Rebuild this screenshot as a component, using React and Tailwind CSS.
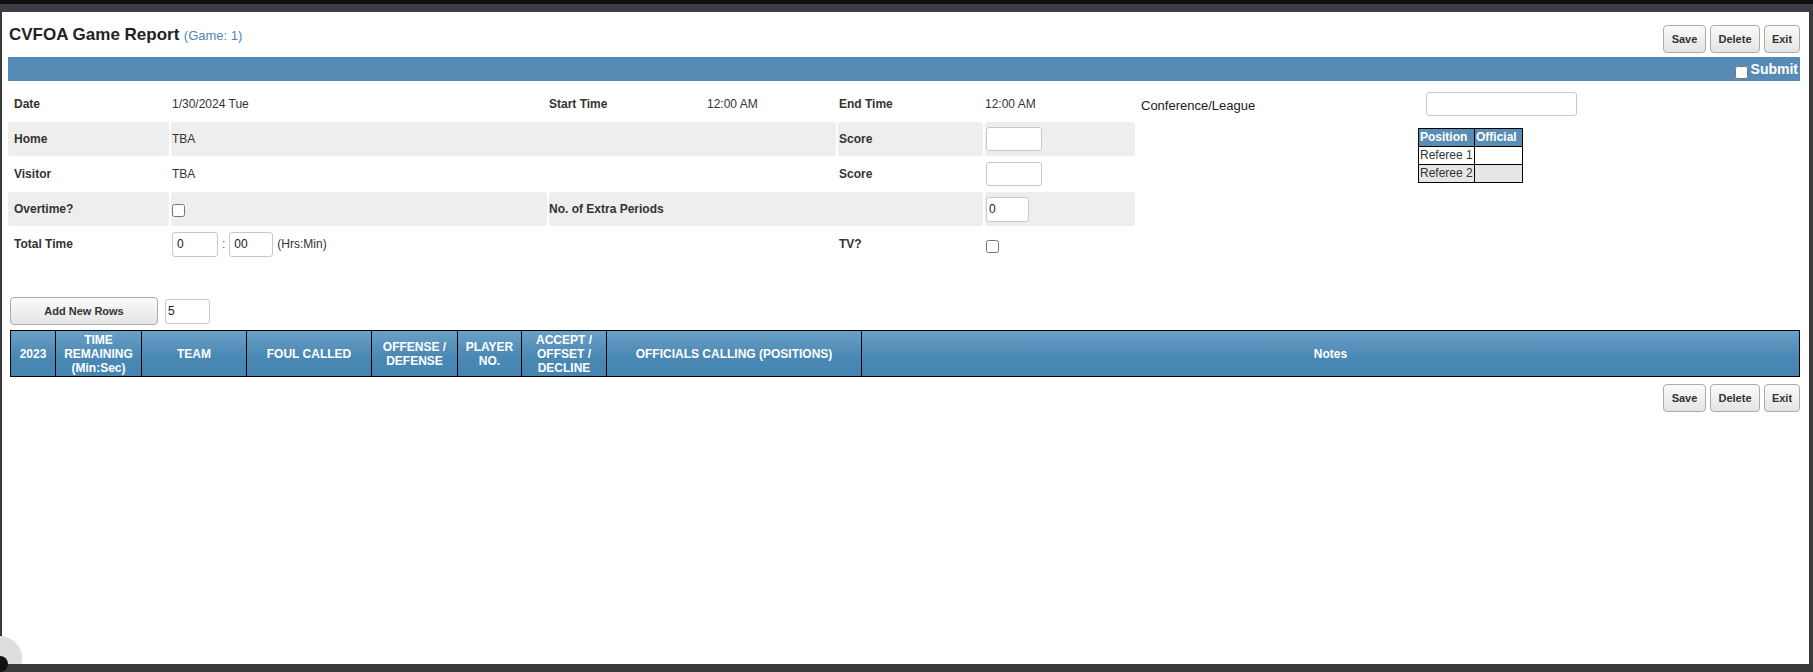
import React from "react";

const font = "font-['Liberation_Sans',Arial,Helvetica,sans-serif]";

function GrayButton({ children, className = "" }) {
  return (
    <button
      type="button"
      className={`h-[28px] rounded-[4px] border border-[#ababab] bg-[linear-gradient(to_bottom,#fbfbfb,#e4e4e4)] text-[11px] font-bold text-[#333] leading-none ${className}`}
    >
      {children}
    </button>
  );
}

function ActionButtons() {
  return (
    <div className="flex gap-[4px]">
      <GrayButton className="w-[43px]">Save</GrayButton>
      <GrayButton className="w-[50px]">Delete</GrayButton>
      <GrayButton className="w-[36px]">Exit</GrayButton>
    </div>
  );
}

function TextBox({ value = "", className = "" }) {
  return (
    <input
      type="text"
      defaultValue={value}
      className={`border border-[#c8c8c8] rounded-[3px] bg-white px-[4px] text-[12px] text-[#222] outline-none ${className}`}
    />
  );
}

function Check({ className = "" }) {
  return <input type="checkbox" className={`w-[13px] h-[13px] m-0 ${className}`} />;
}

const label = "text-[12px] font-bold text-[#333]";
const value = "text-[12px] text-[#333]";
const gray = "bg-[#eeeeee] rounded-[3px]";

function GameForm() {
  return (
    <div className="grid grid-cols-[161px_376px_155px_130px_145px_150px] auto-rows-[34px] gap-x-[2px] gap-y-[1px]">
      {/* Date row */}
      <div className={`flex items-center pl-[6px] ${label}`}>Date</div>
      <div className={`flex items-center pl-[1px] ${value}`}>1/30/2024 Tue</div>
      <div className={`flex items-center ${label}`}>Start Time</div>
      <div className={`flex items-center pl-[1px] ${value}`}>12:00 AM</div>
      <div className={`flex items-center pl-[1px] ${label}`}>End Time</div>
      <div className={`flex items-center ${value}`}>12:00 AM</div>

      {/* Home row */}
      <div className={`flex items-center pl-[6px] ${gray} ${label}`}>Home</div>
      <div className={`col-span-3 flex items-center pl-[1px] ${gray} ${value}`}>TBA</div>
      <div className={`flex items-center pl-[1px] ${gray} ${label}`}>Score</div>
      <div className={`flex items-center pl-[1px] ${gray}`}>
        <TextBox className="w-[56px] h-[24px]" />
      </div>

      {/* Visitor row */}
      <div className={`flex items-center pl-[6px] ${label}`}>Visitor</div>
      <div className={`col-span-3 flex items-center pl-[1px] ${value}`}>TBA</div>
      <div className={`flex items-center pl-[1px] ${label}`}>Score</div>
      <div className="flex items-center pl-[1px]">
        <TextBox className="w-[56px] h-[24px]" />
      </div>

      {/* Overtime row */}
      <div className={`flex items-center pl-[6px] ${gray} ${label}`}>Overtime?</div>
      <div className={`flex items-center pl-[1px] pt-[3px] ${gray}`}>
        <Check />
      </div>
      <div className={`col-span-3 flex items-center ${gray} ${label}`}>No. of Extra Periods</div>
      <div className={`flex items-center pl-[1px] ${gray}`}>
        <TextBox value="0" className="w-[43px] h-[25px] pl-[2px]" />
      </div>

      {/* Total time row */}
      <div className={`flex items-center pl-[6px] ${label}`}>Total Time</div>
      <div className="flex items-center pl-[1px] gap-[4px]">
        <TextBox value="0" className="w-[46px] h-[25px]" />
        <span className="text-[12px] text-[#555]">:</span>
        <TextBox value="00" className="w-[44px] h-[25px]" />
        <span className={value}>(Hrs:Min)</span>
      </div>
      <div />
      <div />
      <div className={`flex items-center pl-[1px] ${label}`}>TV?</div>
      <div className="flex items-center pl-[1px] pt-[4px]">
        <Check />
      </div>
    </div>
  );
}

function OfficialsTable() {
  const cell = "border border-black px-[1px] text-[12px] leading-[17px] text-left whitespace-nowrap";
  return (
    <table className="border-collapse">
      <thead>
        <tr className="bg-[#5a8db6]">
          <th className={`${cell} w-[56px] font-bold text-white`}>Position</th>
          <th className={`${cell} w-[48px] font-bold text-white`}>Official</th>
        </tr>
      </thead>
      <tbody>
        <tr className="bg-white">
          <td className={`${cell} text-[#333]`}>Referee 1</td>
          <td className={cell}></td>
        </tr>
        <tr className="bg-[#e6e6e6]">
          <td className={`${cell} text-[#333]`}>Referee 2</td>
          <td className={cell}></td>
        </tr>
      </tbody>
    </table>
  );
}

const columns = [
  { w: "w-[44px]", lines: ["2023"] },
  { w: "w-[86px]", lines: ["TIME", "REMAINING", "(Min:Sec)"] },
  { w: "w-[105px]", lines: ["TEAM"] },
  { w: "w-[125px]", lines: ["FOUL CALLED"] },
  { w: "w-[86px]", lines: ["OFFENSE /", "DEFENSE"] },
  { w: "w-[64px]", lines: ["PLAYER", "NO."] },
  { w: "w-[85px]", lines: ["ACCEPT /", "OFFSET /", "DECLINE"] },
  { w: "w-[255px]", lines: ["OFFICIALS CALLING (POSITIONS)"] },
  { w: "flex-1", lines: ["Notes"] },
];

function PenaltyHeader() {
  return (
    <div className="ml-[2px] mt-[5px] h-[47px] flex border border-black bg-[linear-gradient(to_bottom,#6aa0c6,#4b89b5_55%,#4585b1)]">
      {columns.map((c, i) => (
        <div
          key={i}
          className={`${c.w} ${i > 0 ? "border-l border-black" : ""} flex flex-col items-center justify-center text-center text-[12px] font-bold leading-[14px] text-white`}
        >
          {c.lines.map((l) => (
            <span key={l}>{l}</span>
          ))}
        </div>
      ))}
    </div>
  );
}

export default function App() {
  return (
    <div className={`relative w-[1813px] h-[672px] overflow-hidden bg-[#3a3a3a] flex flex-col ${font}`}>
      <div className="h-[4px] bg-[#111113]" />
      <div className="h-[8px] bg-[#3d3d45]" />
      <div className="flex flex-1 min-h-0">
        <div className="w-[2px] bg-[#3a3a3a]" />
        <main className="flex-1 bg-white pl-[6px] pr-[9px] pt-[13px]">
          <div className="flex justify-between items-start">
            <h1 className="pl-[1px] leading-[20px] text-[#222]">
              <span className="text-[17px] font-bold">CVFOA Game Report</span>{" "}
              <span className="text-[13px] text-[#4f86b6]">(Game: 1)</span>
            </h1>
            <ActionButtons />
          </div>

          <div className="mt-[4px] h-[24px] bg-[#558bb4] flex items-center justify-end pr-[2px]">
            <Check className="mt-[7px] mr-[3px]" />
            <span className="text-[14px] font-bold text-white">Submit</span>
          </div>

          <div className="mt-[6px] flex items-start">
            <GameForm />
            <div className="ml-[6px] flex flex-col">
              <div className="h-[34px] flex items-center">
                <span className="w-[285px] pt-[3px] text-[13px] text-[#222]">Conference/League</span>
                <TextBox className="w-[151px] h-[24px]" />
              </div>
              <div className="ml-[277px] mt-[7px]">
                <OfficialsTable />
              </div>
            </div>
          </div>

          <div className="mt-[36px] flex items-center">
            <button
              type="button"
              className="ml-[2px] w-[148px] h-[28px] rounded-[4px] border border-[#ababab] bg-[linear-gradient(to_bottom,#fbfbfb,#e4e4e4)] text-[11px] font-bold text-[#333]"
            >
              Add New Rows
            </button>
            <TextBox value="5" className="ml-[7px] w-[45px] h-[25px] pl-[2px]" />
          </div>

          <PenaltyHeader />

          <div className="mt-[7px] flex justify-end">
            <ActionButtons />
          </div>
        </main>
        <div className="w-[4px] bg-[#3a3a3a]" />
      </div>
      <div className="relative z-10 h-[8px] bg-[#3a3a3a]" />

      {/* floating corner control */}
      <div className="absolute left-[-22px] top-[636px] w-[44px] h-[44px] rounded-full bg-[#dedede]" />
      <div className="absolute z-20 left-[-8px] top-[656px] w-[16px] h-[16px] rounded-full bg-[#111]" />
    </div>
  );
}
